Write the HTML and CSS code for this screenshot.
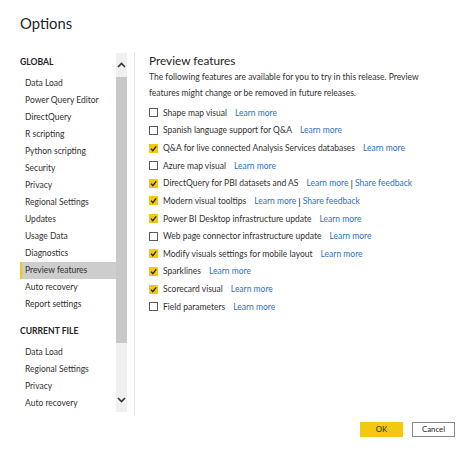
FILE: index.html
```html
<!DOCTYPE html>
<html lang="en">
<head>
<meta charset="utf-8">
<title>Options</title>
<link rel="stylesheet" href="styles.css">
</head>
<body>
<div class="window">
  <header class="title">Options</header>
  <div class="main">
    <aside class="side">
      <nav class="nav">
        <div class="group">GLOBAL</div>
        <div class="item">Data Load</div>
        <div class="item">Power Query Editor</div>
        <div class="item">DirectQuery</div>
        <div class="item">R scripting</div>
        <div class="item">Python scripting</div>
        <div class="item">Security</div>
        <div class="item">Privacy</div>
        <div class="item">Regional Settings</div>
        <div class="item">Updates</div>
        <div class="item">Usage Data</div>
        <div class="item">Diagnostics</div>
        <div class="item selected">Preview features</div>
        <div class="item">Auto recovery</div>
        <div class="item">Report settings</div>
        <div class="group group-2">CURRENT FILE</div>
        <div class="item">Data Load</div>
        <div class="item">Regional Settings</div>
        <div class="item">Privacy</div>
        <div class="item">Auto recovery</div>
      </nav>
      <div class="scrollbar">
        <div class="arrow">
          <svg width="9" height="6" viewBox="0 0 9 6"><path d="M1 5 L4.5 1.5 L8 5" fill="none" stroke="#333" stroke-width="1.6"/></svg>
        </div>
        <div class="thumb"></div>
        <div class="rest"></div>
        <div class="arrow">
          <svg width="9" height="6" viewBox="0 0 9 6"><path d="M1 1 L4.5 4.5 L8 1" fill="none" stroke="#333" stroke-width="1.6"/></svg>
        </div>
      </div>
    </aside>
    <section class="content">
      <h1 class="heading">Preview features</h1>
      <p class="desc">The following features are available for you to try in this release. Preview features might change or be removed in future releases.</p>
      <ul class="features">
        <li class="row"><span class="box"></span><span class="label">Shape map visual</span><a class="link">Learn more</a></li>
        <li class="row"><span class="box"></span><span class="label">Spanish language support for Q&amp;A</span><a class="link">Learn more</a></li>
        <li class="row"><span class="box checked"><svg width="9" height="9" viewBox="0 0 9 9"><path d="M2 4.6 L3.8 6.6 L7.2 2.4" fill="none" stroke="#222" stroke-width="1.4"/></svg></span><span class="label">Q&amp;A for live connected Analysis Services databases</span><a class="link">Learn more</a></li>
        <li class="row"><span class="box"></span><span class="label">Azure map visual</span><a class="link">Learn more</a></li>
        <li class="row"><span class="box checked"><svg width="9" height="9" viewBox="0 0 9 9"><path d="M2 4.6 L3.8 6.6 L7.2 2.4" fill="none" stroke="#222" stroke-width="1.4"/></svg></span><span class="label">DirectQuery for PBI datasets and AS</span><a class="link">Learn more</a><span class="pipe">|</span><a class="link link-2">Share feedback</a></li>
        <li class="row"><span class="box checked"><svg width="9" height="9" viewBox="0 0 9 9"><path d="M2 4.6 L3.8 6.6 L7.2 2.4" fill="none" stroke="#222" stroke-width="1.4"/></svg></span><span class="label">Modern visual tooltips</span><a class="link">Learn more</a><span class="pipe">|</span><a class="link link-2">Share feedback</a></li>
        <li class="row"><span class="box checked"><svg width="9" height="9" viewBox="0 0 9 9"><path d="M2 4.6 L3.8 6.6 L7.2 2.4" fill="none" stroke="#222" stroke-width="1.4"/></svg></span><span class="label">Power BI Desktop infrastructure update</span><a class="link">Learn more</a></li>
        <li class="row"><span class="box"></span><span class="label">Web page connector infrastructure update</span><a class="link">Learn more</a></li>
        <li class="row"><span class="box checked"><svg width="9" height="9" viewBox="0 0 9 9"><path d="M2 4.6 L3.8 6.6 L7.2 2.4" fill="none" stroke="#222" stroke-width="1.4"/></svg></span><span class="label">Modify visuals settings for mobile layout</span><a class="link">Learn more</a></li>
        <li class="row"><span class="box checked"><svg width="9" height="9" viewBox="0 0 9 9"><path d="M2 4.6 L3.8 6.6 L7.2 2.4" fill="none" stroke="#222" stroke-width="1.4"/></svg></span><span class="label">Sparklines</span><a class="link">Learn more</a></li>
        <li class="row"><span class="box checked"><svg width="9" height="9" viewBox="0 0 9 9"><path d="M2 4.6 L3.8 6.6 L7.2 2.4" fill="none" stroke="#222" stroke-width="1.4"/></svg></span><span class="label">Scorecard visual</span><a class="link">Learn more</a></li>
        <li class="row"><span class="box"></span><span class="label">Field parameters</span><a class="link">Learn more</a></li>
      </ul>
    </section>
  </div>
  <footer class="buttons">
    <button class="btn btn-ok">OK</button>
    <button class="btn btn-cancel">Cancel</button>
  </footer>
</div>
</body>
</html>
```

FILE: styles.css
```css
* { box-sizing: border-box; }
html, body { margin: 0; padding: 0; background: #fff; }
body {
  font-family: Lato, "Open Sans", sans-serif;
  color: #252423;
  width: 474px;
  height: 454px;
  overflow: hidden;
}
.window { width: 474px; height: 454px; display: flex; flex-direction: column; }

.title {
  height: 52px;
  padding: 12px 0 0 20px;
  font-size: 14.8px;
  line-height: 22px;
  font-weight: 400;
  color: #201f1e;
}

.main { display: flex; height: 363px; }

.side {
  width: 135px;
  display: flex;
  padding-left: 20px;
  border-right: 1px solid #e6e6e6;
}
.nav {
  width: 96px;
  height: 359px;
  overflow: hidden;
  font-size: 8.5px;
}
.group {
  font-weight: 700;
  line-height: 17px;
  margin-top: 1.5px;
  margin-bottom: 4px;
  font-size: 8.6px;
  color: #252423;
}
.group-2 { margin-top: 10px; }
.item {
  line-height: 17px;
  height: 17px;
  padding-left: 5px;
  white-space: nowrap;
  color: #323130;
}
.item.selected {
  background: #cdcdcd;
  border-left: 2px solid #f2c811;
  padding-left: 3px;
}

.scrollbar {
  width: 11px;
  height: 359px;
  margin-top: 1px;
  background: #f0f0f0;
  display: flex;
  flex-direction: column;
}
.arrow {
  height: 24px;
  display: flex;
  align-items: center;
  justify-content: center;
}
.thumb { height: 266px; background: #c8c8c8; }
.rest { flex: 1; }

.content { flex: 1; padding-left: 14px; }
.heading {
  margin: 0;
  font-size: 11.8px;
  line-height: 17px;
  font-weight: 400;
  color: #252423;
}
.desc {
  margin: 0;
  font-size: 8.5px;
  line-height: 16px;
  width: 280px;
  color: #323130;
}
.features { list-style: none; margin: 3px 0 0; padding: 0; }
.row {
  height: 17.64px;
  display: flex;
  align-items: center;
  font-size: 8.5px;
  white-space: nowrap;
  color: #323130;
}
.box {
  width: 9px;
  height: 9px;
  border: 1px solid #5a5a5a;
  margin-right: 5px;
  flex: none;
  display: flex;
}
.box.checked { background: #f2c811; border: none; }
.label { margin-right: 8px; }
.link { color: #2f72c4; cursor: pointer; }
.pipe { color: #252423; margin: 0 2px; font-size: 10px; }

.buttons {
  display: flex;
  justify-content: flex-end;
  gap: 9px;
  padding: 7px 19px 0 0;
}
.btn {
  width: 43px;
  height: 15px;
  font-family: Lato, "Open Sans", sans-serif;
  font-size: 7.8px;
  line-height: 13px;
  padding: 0;
  color: #252423;
}
.btn-ok { background: #f2c811; border: 1px solid #f2c811; }
.btn-cancel { background: #fff; border: 1px solid #8a8886; }
```
